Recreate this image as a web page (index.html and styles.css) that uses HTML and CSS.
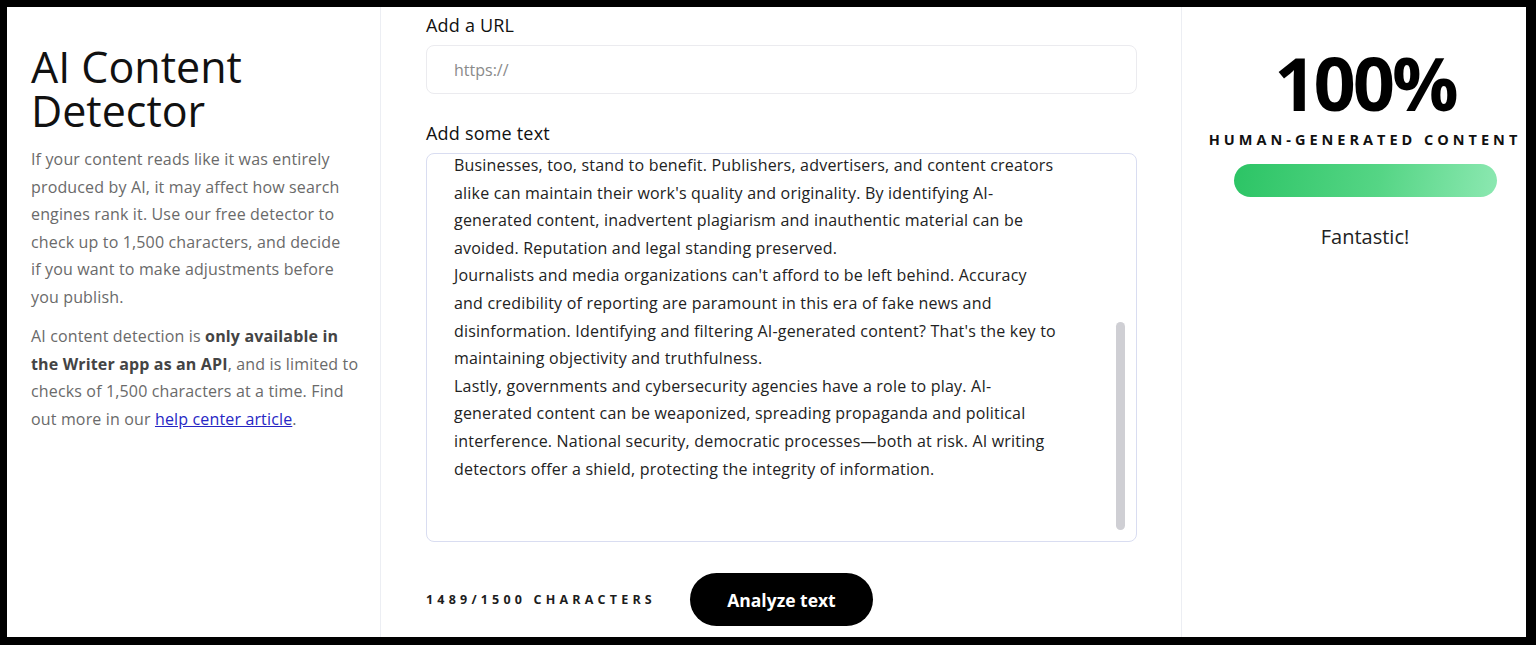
FILE: index.html
```html
<!DOCTYPE html>
<html lang="en">
<head>
    <meta charset="UTF-8">
    <meta name="viewport" content="width=device-width, initial-scale=1.0">
    <title>AI Content Detector</title>
    <link rel="stylesheet" href="styles.css">
</head>
<body>
    <div class="frame">
        <div class="intro">
            <h1>AI Content<br>Detector</h1>
            <p>If your content reads like it was entirely<br>produced by AI, it may affect how search<br>engines rank it. Use our free detector to<br>check up to 1,500 characters, and decide<br>if you want to make adjustments before<br>you publish.</p>
            <p>AI content detection is <b>only available in<br>the Writer app as an API</b>, and is limited to<br>checks of 1,500 characters at a time. Find<br>out more in our <a href="#">help center article</a>.</p>
        </div>

        <div class="editor">
            <label class="field-label" for="url">Add a URL</label>
            <input class="url-input" type="text" id="url" placeholder="https://">

            <label class="field-label second">Add some text</label>
            <div class="text-box">
                <div class="text-content">
                    Businesses, too, stand to benefit. Publishers, advertisers, and content creators<br>
                    alike can maintain their work's quality and originality. By identifying AI-<br>
                    generated content, inadvertent plagiarism and inauthentic material can be<br>
                    avoided. Reputation and legal standing preserved.<br>
                    Journalists and media organizations can't afford to be left behind. Accuracy<br>
                    and credibility of reporting are paramount in this era of fake news and<br>
                    disinformation. Identifying and filtering AI-generated content? That's the key to<br>
                    maintaining objectivity and truthfulness.<br>
                    Lastly, governments and cybersecurity agencies have a role to play. AI-<br>
                    generated content can be weaponized, spreading propaganda and political<br>
                    interference. National security, democratic processes—both at risk. AI writing<br>
                    detectors offer a shield, protecting the integrity of information.
                </div>
                <div class="scroll-thumb"></div>
            </div>

            <div class="actions">
                <span class="counter">1489/1500 characters</span>
                <button class="analyze">Analyze text</button>
            </div>
        </div>

        <div class="result">
            <div class="percent">100%</div>
            <div class="result-label">Human-generated content</div>
            <div class="meter"></div>
            <div class="verdict">Fantastic!</div>
        </div>
    </div>
</body>
</html>
```

FILE: styles.css
```css
* {
    box-sizing: border-box;
}
body {
    margin: 0;
    background: #000;
    font-family: "Open Sans", "DejaVu Sans", sans-serif;
    color: #222;
}
.frame {
    margin: 7px 10px 8px 7px;
    height: 630px;
    background: #fff;
    display: grid;
    grid-template-columns: 374px 801px 1fr;
    overflow: hidden;
}

/* left column */
.intro {
    padding: 38px 20px 0 24px;
    border-right: 1px solid #eceef3;
}
.intro h1 {
    margin: 0 0 13px;
    font-size: 43px;
    line-height: 44px;
    font-weight: 500;
    color: #111;
}
.intro p {
    margin: 0 0 11.5px;
    font-size: 16px;
    line-height: 27.6px;
    letter-spacing: 0.15px;
    color: #6a6a6a;
    white-space: nowrap;
}
.intro b {
    color: #444;
    font-weight: 700;
}
.intro a {
    color: #2626c4;
}

/* middle column */
.editor {
    padding: 6px 44px 0 45px;
    border-right: 1px solid #eceef3;
    display: flex;
    flex-direction: column;
}
.field-label {
    display: block;
    font-size: 18px;
    line-height: 24px;
    font-weight: 500;
    letter-spacing: 0.2px;
    color: #111;
    margin-bottom: 8px;
}
.field-label.second {
    margin-top: 27px;
}
.url-input {
    height: 49px;
    border: 1px solid #ebebef;
    border-radius: 8px;
    padding: 0 27px;
    font-family: inherit;
    font-size: 16px;
    color: #222;
    outline: none;
}
.url-input::placeholder {
    color: #8a8a8a;
}
.text-box {
    position: relative;
    height: 389px;
    border: 1px solid #d9ddf1;
    border-radius: 8px;
    padding: 0 27px;
    overflow: hidden;
}
.text-content {
    margin-top: -2px;
    font-size: 16px;
    line-height: 27.6px;
    letter-spacing: 0.2px;
    color: #222;
    white-space: nowrap;
}
.scroll-thumb {
    position: absolute;
    right: 11px;
    top: 168px;
    width: 9px;
    height: 208px;
    border-radius: 5px;
    background: #cfcfd4;
}
.actions {
    margin-top: 31px;
    display: flex;
    align-items: center;
    gap: 34px;
}
.counter {
    font-size: 12.5px;
    font-weight: 700;
    letter-spacing: 4.2px;
    text-transform: uppercase;
    color: #1d1d1d;
}
.analyze {
    width: 183px;
    height: 53px;
    border: none;
    border-radius: 27px;
    background: #000;
    color: #fff;
    font-family: inherit;
    font-size: 17.5px;
    font-weight: 700;
    cursor: pointer;
}

/* right column */
.result {
    padding: 38.5px 0 0 22px;
    display: flex;
    flex-direction: column;
    align-items: center;
}
.percent {
    font-size: 74px;
    line-height: 74px;
    font-weight: 700;
    letter-spacing: -3px;
    color: #000;
}
.result-label {
    margin-top: 10.5px;
    font-size: 14.5px;
    line-height: 20px;
    font-weight: 700;
    letter-spacing: 4px;
    text-transform: uppercase;
    color: #111;
    white-space: nowrap;
}
.meter {
    margin-top: 13.5px;
    width: 263px;
    height: 33px;
    border-radius: 17px;
    background: linear-gradient(100deg, #2cc465 0%, #55d585 55%, #8ce8b1 100%);
}
.verdict {
    margin-top: 27px;
    font-size: 20px;
    line-height: 26px;
    color: #222;
}
```
